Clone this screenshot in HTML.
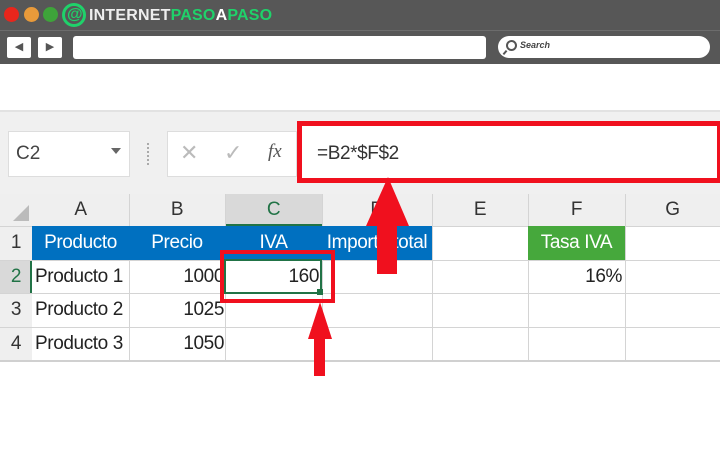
<!DOCTYPE html>
<html><head><style>
*{margin:0;padding:0;box-sizing:border-box}
body{width:720px;height:450px;background:#fff;position:relative;overflow:hidden;font-family:"Liberation Sans",sans-serif}
.a{position:absolute}
.c{position:absolute;display:flex;align-items:center;font-family:"Liberation Sans",sans-serif;font-size:19px;letter-spacing:-0.4px;color:#222}
.h{justify-content:center;color:#333}
.vl{position:absolute;width:1px;background:#d4d4d4}
.hl{position:absolute;height:1px;background:#d4d4d4}
</style></head><body>
<div class="a" style="left:0;top:0;width:720px;height:64px;background:#575757"></div>
<div class="a" style="left:0;top:30px;width:720px;height:1px;background:#6c6c6c"></div>
<div class="a" style="left:4px;top:7px;width:15px;height:15px;border-radius:50%;background:#e8261c"></div>
<div class="a" style="left:24px;top:7px;width:15px;height:15px;border-radius:50%;background:#e89a3a"></div>
<div class="a" style="left:43px;top:7px;width:15px;height:15px;border-radius:50%;background:#3ea43a"></div>
<div class="a" style="left:62px;top:3px;width:24px;height:24px;border-radius:50%;border:3px solid #1fd26a"></div>
<div class="a" style="left:67px;top:6px;font-size:16px;font-weight:bold;color:#1fd26a">@</div>
<div class="a" style="left:89px;top:7px;font-size:16px;font-weight:bold;letter-spacing:0.2px;color:#eee">INTERNET<span style="color:#1fd26a">PASO</span><span style="color:#fff">A</span><span style="color:#1fd26a">PASO</span></div>
<div class="a" style="left:7px;top:37px;width:24px;height:21px;background:#fff;border-radius:2px;font-size:11px;color:#555;text-align:center;line-height:21px">◀</div>
<div class="a" style="left:38px;top:37px;width:24px;height:21px;background:#fff;border-radius:2px;font-size:11px;color:#555;text-align:center;line-height:21px">▶</div>
<div class="a" style="left:73px;top:36px;width:413px;height:23px;background:#fff;border-radius:3px"></div>
<div class="a" style="left:498px;top:36px;width:212px;height:22px;background:#fff;border-radius:11px"></div>
<div class="a" style="left:506px;top:40px;width:11px;height:11px;border-radius:50%;border:2px solid #555"></div>
<div class="a" style="left:504px;top:50px;width:2px;height:5px;background:#555;transform:rotate(40deg)"></div>
<div class="a" style="left:520px;top:40px;font-size:9px;font-style:italic;font-weight:bold;color:#444">Search</div>
<div class="a" style="left:0;top:110px;width:720px;height:84px;background:#f0f0f0;border-top:2px solid #e2e2e2"></div>
<div class="a" style="left:8px;top:131px;width:122px;height:46px;background:#fff;border:1px solid #ddd"></div>
<div class="a" style="left:16px;top:143px;font-size:19px;color:#444">C2</div>
<div class="a" style="left:111px;top:148px;width:0;height:0;border-left:5px solid transparent;border-right:5px solid transparent;border-top:6px solid #666"></div>
<div class="a" style="left:147px;top:143px;width:2px;height:22px;border-left:2px dotted #aaa"></div>
<div class="a" style="left:167px;top:131px;width:130px;height:46px;background:#fff;border:1px solid #ddd"></div>
<div class="a" style="left:180px;top:140px;font-size:22px;color:#bbb">✕</div>
<div class="a" style="left:224px;top:140px;font-size:22px;color:#bbb">✓</div>
<div class="a" style="left:268px;top:141px;font-size:19px;font-style:italic;font-family:'Liberation Serif',serif;color:#555">fx</div>
<div class="a" style="left:297px;top:121px;width:423px;height:62px;background:#fff;border:5px solid #f0101e;border-right-width:3px"></div>
<div class="a" style="left:317px;top:143px;font-size:19px;letter-spacing:-0.4px;color:#333">=B2*$F$2</div>
<div class="a" style="left:0;top:194px;width:720px;height:32px;background:#efefef"></div>
<div class="a" style="left:225px;top:194px;width:97px;height:32px;background:#d9d9d9;border-bottom:2px solid #217346"></div>
<div class="a" style="left:13px;top:205px;width:0;height:0;border-left:16px solid transparent;border-bottom:16px solid #bbb"></div>
<div class="c h" style="left:32px;top:194px;width:97px;height:32px">A</div>
<div class="c h" style="left:129px;top:194px;width:96px;height:32px">B</div>
<div class="c h" style="left:225px;top:194px;width:97px;height:32px;color:#217346">C</div>
<div class="c h" style="left:322px;top:194px;width:110px;height:32px">D</div>
<div class="c h" style="left:432px;top:194px;width:96px;height:32px">E</div>
<div class="c h" style="left:528px;top:194px;width:97px;height:32px">F</div>
<div class="c h" style="left:625px;top:194px;width:95px;height:32px">G</div>
<div class="a" style="left:0;top:226px;width:32px;height:135px;background:#efefef"></div>
<div class="a" style="left:0;top:260px;width:32px;height:33px;background:#d9d9d9;border-right:2px solid #217346"></div>
<div class="c h" style="left:0;top:226px;width:32px;height:34px">1</div>
<div class="c h" style="left:0;top:260px;width:32px;height:33px;color:#217346">2</div>
<div class="c h" style="left:0;top:293px;width:32px;height:34px">3</div>
<div class="c h" style="left:0;top:327px;width:32px;height:34px">4</div>
<div class="vl" style="left:129px;top:194px;height:167px"></div>
<div class="vl" style="left:225px;top:194px;height:167px"></div>
<div class="vl" style="left:322px;top:194px;height:167px"></div>
<div class="vl" style="left:432px;top:194px;height:167px"></div>
<div class="vl" style="left:528px;top:194px;height:167px"></div>
<div class="vl" style="left:625px;top:194px;height:167px"></div>
<div class="hl" style="left:0;top:226px;width:720px"></div>
<div class="hl" style="left:0;top:293px;width:720px"></div>
<div class="hl" style="left:0;top:327px;width:720px"></div>
<div class="hl" style="left:0;top:260px;width:720px"></div>
<div class="a" style="left:0;top:360px;width:720px;height:2px;background:#d0d0d0"></div>
<div class="a" style="left:32px;top:226px;width:400px;height:34px;background:#0070c0"></div>
<div class="a" style="left:528px;top:226px;width:97px;height:34px;background:#46a83c"></div>
<div class="c h" style="left:32px;top:226px;width:97px;height:34px;color:#fff">Producto</div>
<div class="c h" style="left:129px;top:226px;width:96px;height:34px;color:#fff">Precio</div>
<div class="c h" style="left:225px;top:226px;width:97px;height:34px;color:#fff">IVA</div>
<div class="c h" style="left:322px;top:226px;width:110px;height:34px;color:#fff">Importe total</div>
<div class="c h" style="left:528px;top:226px;width:97px;height:34px;color:#fff">Tasa IVA</div>
<div class="c" style="left:35px;top:260px;height:33px">Producto 1</div>
<div class="c" style="left:35px;top:293px;height:34px">Producto 2</div>
<div class="c" style="left:35px;top:327px;height:34px">Producto 3</div>
<div class="c" style="left:129px;top:260px;width:95px;height:33px;justify-content:flex-end">1000</div>
<div class="c" style="left:129px;top:293px;width:95px;height:34px;justify-content:flex-end">1025</div>
<div class="c" style="left:129px;top:327px;width:95px;height:34px;justify-content:flex-end">1050</div>
<div class="c" style="left:528px;top:260px;width:94px;height:33px;justify-content:flex-end">16%</div>
<div class="a" style="left:224px;top:259px;width:98px;height:35px;border:2px solid #217346;background:#fff"></div>
<div class="c" style="left:225px;top:260px;width:94px;height:33px;justify-content:flex-end">160</div>
<div class="a" style="left:317px;top:289px;width:6px;height:6px;background:#217346"></div>
<div class="a" style="left:220px;top:250px;width:115px;height:53px;border:4px solid #f0101e"></div>
<svg class="a" style="left:0;top:0" width="720" height="450">
<path d="M388 177 L409 226 L397 226 L397 274 L377 274 L377 226 L366 226 Z" fill="#f0101e"/>
<path d="M320 302 L332 339 L325 339 L325 376 L314 376 L314 339 L308 339 Z" fill="#f0101e"/>
</svg>
</body></html>
